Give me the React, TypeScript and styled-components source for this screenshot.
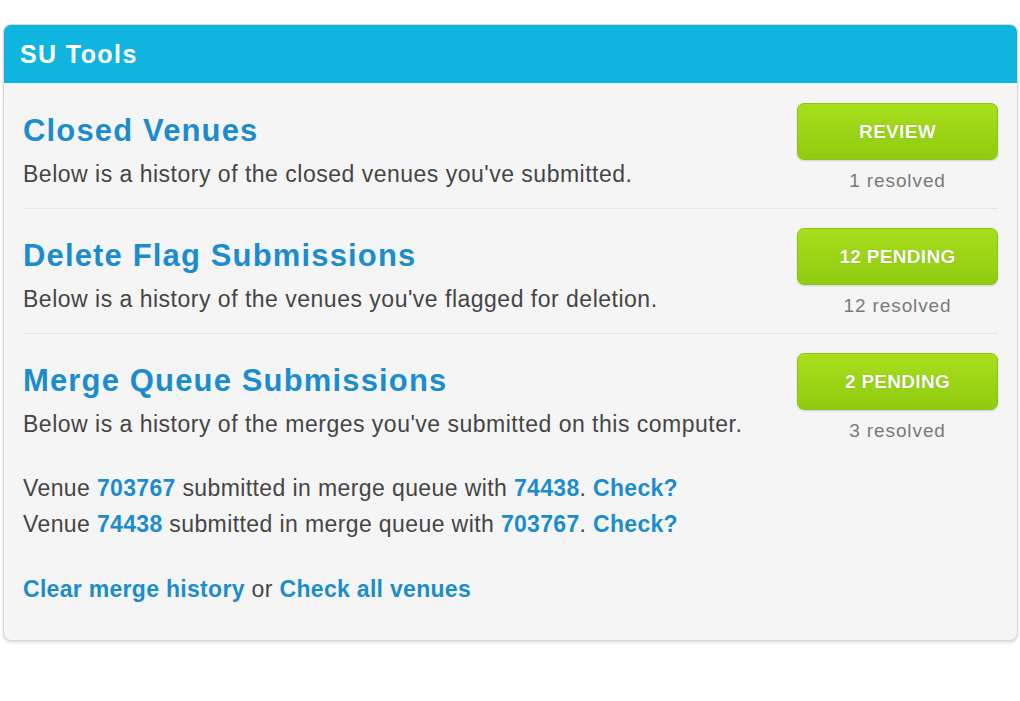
import React from 'react';
import styled, { createGlobalStyle } from 'styled-components';

interface Tool {
  title: string;
  description: string;
  action: string;
  resolved: string;
}

const tools: Tool[] = [
  {
    title: 'Closed Venues',
    description: "Below is a history of the closed venues you've submitted.",
    action: 'Review',
    resolved: '1 resolved'
  },
  {
    title: 'Delete Flag Submissions',
    description: "Below is a history of the venues you've flagged for deletion.",
    action: '12 Pending',
    resolved: '12 resolved'
  },
  {
    title: 'Merge Queue Submissions',
    description: "Below is a history of the merges you've submitted on this computer.",
    action: '2 Pending',
    resolved: '3 resolved'
  }
];

const merges = [
  { venue: '703767', other: '74438' },
  { venue: '74438', other: '703767' }
];

const GlobalStyle = createGlobalStyle`
  html, body {
    margin: 0;
    padding: 0;
    background: #fff;
  }
  body {
    font-family: 'Liberation Sans', Arial, Helvetica, sans-serif;
    -webkit-font-smoothing: antialiased;
  }
`;

const Page = styled.div`
  padding: 24px 2px 40px 3px;
`;

const Panel = styled.div`
  background: #f5f5f5;
  border: 1px solid #d6d6d6;
  border-radius: 8px;
  overflow: hidden;
  box-shadow: 0 2px 3px rgba(0, 0, 0, 0.12);
`;

const Header = styled.div`
  height: 58px;
  display: flex;
  align-items: center;
  padding-left: 16px;
  background: #0fb5df;
  border-bottom: 1px solid #e9f6fa;
  color: #fff;
  font-size: 25px;
  font-weight: bold;
  letter-spacing: 1.4px;
`;

const Section = styled.div<{ $last?: boolean }>`
  display: flex;
  justify-content: space-between;
  align-items: flex-start;
  margin: 0 19px;
  padding: 19px 0 ${p => (p.$last ? '0' : '15px')};
  border-bottom: ${p => (p.$last ? 'none' : '1px solid #e4e4e4')};
`;

const Info = styled.div`
  padding-top: 10px;
`;

const Title = styled.h2`
  margin: 0;
  font-size: 31px;
  line-height: 36px;
  font-weight: bold;
  letter-spacing: 1.15px;
  color: #1b8dcf;
`;

const Description = styled.p`
  margin: 10px 0 0;
  font-size: 23px;
  line-height: 30px;
  letter-spacing: 0.5px;
  color: #454545;
`;

const Actions = styled.div`
  width: 201px;
  display: flex;
  flex-direction: column;
  align-items: center;
`;

const ActionButton = styled.button`
  box-sizing: border-box;
  width: 201px;
  height: 57px;
  border: 1px solid #8cc414;
  border-radius: 7px;
  background: linear-gradient(#a9df1c, #8fcb10);
  box-shadow: 0 1px 2px rgba(0, 0, 0, 0.15);
  color: #fff;
  font-family: inherit;
  font-size: 19px;
  font-weight: bold;
  letter-spacing: 0.3px;
  text-transform: uppercase;
  text-shadow: 0 0 1px rgba(70, 110, 0, 0.6);
  cursor: pointer;
`;

const Resolved = styled.div`
  margin-top: 9px;
  font-size: 19px;
  line-height: 24px;
  letter-spacing: 0.9px;
  color: #7a7a7a;
`;

const MergeList = styled.div`
  padding: 27px 19px 33px;
  font-size: 23px;
  letter-spacing: 0.4px;
  color: #454545;
`;

const MergeLine = styled.div`
  line-height: 36px;
`;

const Link = styled.a`
  color: #1b8dcf;
  font-weight: bold;
  letter-spacing: 0.3px;
  text-decoration: none;
  cursor: pointer;
`;

const Footer = styled.div`
  margin-top: 29px;
  line-height: 36px;
`;

const ToolSection = ({ tool, last }: { tool: Tool; last?: boolean }) => (
  <Section $last={last}>
    <Info>
      <Title>{tool.title}</Title>
      <Description>{tool.description}</Description>
    </Info>
    <Actions>
      <ActionButton>{tool.action}</ActionButton>
      <Resolved>{tool.resolved}</Resolved>
    </Actions>
  </Section>
);

const App = () => {
  return (
    <Page>
      <GlobalStyle />
      <Panel>
        <Header>SU Tools</Header>
        {tools.map((tool, i) => (
          <ToolSection key={tool.title} tool={tool} last={i === tools.length - 1} />
        ))}
        <MergeList>
          {merges.map(m => (
            <MergeLine key={m.venue}>
              Venue <Link>{m.venue}</Link> submitted in merge queue with{' '}
              <Link>{m.other}</Link>. <Link>Check?</Link>
            </MergeLine>
          ))}
          <Footer>
            <Link>Clear merge history</Link> or <Link>Check all venues</Link>
          </Footer>
        </MergeList>
      </Panel>
    </Page>
  );
};

export default App;
